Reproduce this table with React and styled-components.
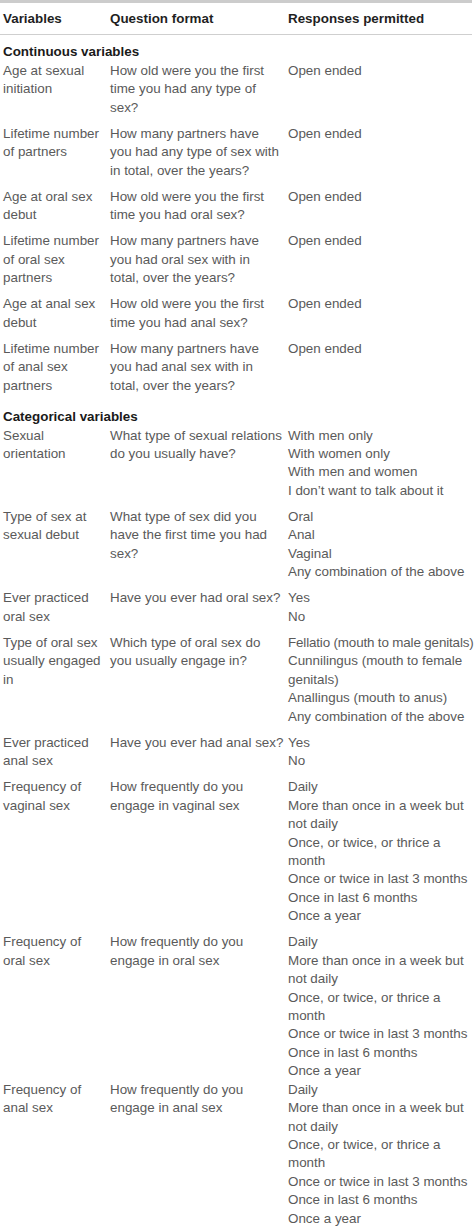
import styled, { createGlobalStyle } from 'styled-components';

const GlobalStyle = createGlobalStyle`
  html, body {
    margin: 0;
    padding: 0;
    background: #ffffff;
    overflow-x: hidden;
  }
  body {
    font-family: 'Liberation Sans', Arial, Helvetica, sans-serif;
    -webkit-font-smoothing: antialiased;
  }
`;

const rows = {
  continuous: [
    {
      variable: 'Age at sexual initiation',
      question: 'How old were you the first time you had any type of sex?',
      responses: ['Open ended'],
    },
    {
      variable: 'Lifetime number of partners',
      question: 'How many partners have you had any type of sex with in total, over the years?',
      responses: ['Open ended'],
    },
    {
      variable: 'Age at oral sex debut',
      question: 'How old were you the first time you had oral sex?',
      responses: ['Open ended'],
    },
    {
      variable: 'Lifetime number of oral sex partners',
      question: 'How many partners have you had oral sex with in total, over the years?',
      responses: ['Open ended'],
    },
    {
      variable: 'Age at anal sex debut',
      question: 'How old were you the first time you had anal sex?',
      responses: ['Open ended'],
    },
    {
      variable: 'Lifetime number of anal sex partners',
      question: 'How many partners have you had anal sex with in total, over the years?',
      responses: ['Open ended'],
    },
  ],
  categorical: [
    {
      variable: 'Sexual orientation',
      question: 'What type of sexual relations do you usually have?',
      responses: [
        'With men only',
        'With women only',
        'With men and women',
        'I don’t want to talk about it',
      ],
    },
    {
      variable: 'Type of sex at sexual debut',
      question: 'What type of sex did you have the first time you had sex?',
      responses: ['Oral', 'Anal', 'Vaginal', 'Any combination of the above'],
    },
    {
      variable: 'Ever practiced oral sex',
      question: 'Have you ever had oral sex?',
      short: true,
      responses: ['Yes', 'No'],
    },
    {
      variable: 'Type of oral sex usually engaged in',
      question: 'Which type of oral sex do you usually engage in?',
      responses: [
        'Fellatio (mouth to male genitals)',
        'Cunnilingus (mouth to female genitals)',
        'Anallingus (mouth to anus)',
        'Any combination of the above',
      ],
    },
    {
      variable: 'Ever practiced anal sex',
      question: 'Have you ever had anal sex?',
      short: true,
      responses: ['Yes', 'No'],
    },
  ],
};

const frequency = [
  'Daily',
  'More than once in a week but not daily',
  'Once, or twice, or thrice a month',
  'Once or twice in last 3 months',
  'Once in last 6 months',
  'Once a year',
];

['vaginal', 'oral', 'anal'].forEach((kind) => {
  rows.categorical.push({
    variable: `Frequency of ${kind} sex`,
    question: `How frequently do you engage in ${kind} sex`,
    responses: frequency,
    compact: kind === 'oral',
  });
});

// this one runs right up to the edge in the original
const tightResponses = ['Fellatio (mouth to male genitals)'];

function App() {
  return (
    <>
      <GlobalStyle />
      <Table>
        <HeadRow>
          <VarCell $head>Variables</VarCell>
          <QuestionCell $head>Question format</QuestionCell>
          <ResponseCell $head>Responses permitted</ResponseCell>
        </HeadRow>
        <Body>
          <Section title='Continuous variables' items={rows.continuous} first />
          <Section title='Categorical variables' items={rows.categorical} />
        </Body>
      </Table>
    </>
  );
}

function Section({ title, items, first }) {
  return (
    <>
      <SectionTitle $first={first}>{title}</SectionTitle>
      {items.map((item, index) => (
        <Row key={index} $compact={item.compact}>
          <VarCell>{item.variable}</VarCell>
          <QuestionCell $nowrap={item.short}>{item.question}</QuestionCell>
          <ResponseCell>
            {item.responses.map((response, i) => (
              <Response key={i} $tight={tightResponses.includes(response)}>
                {response}
              </Response>
            ))}
          </ResponseCell>
        </Row>
      ))}
    </>
  );
}

export default App;

const Table = styled.div`
  width: 472px;
  font-size: 13.4px;
  line-height: 18.4px;
  color: #5a5a5a;
`;

const HeadRow = styled.div`
  display: flex;
  padding: 7px 0 6px 3px;
  border-top: 3px solid #cccccc;
  border-bottom: 1px solid #cfcfcf;
`;

const Body = styled.div`
  padding-left: 3px;
`;

const SectionTitle = styled.div`
  font-weight: 700;
  color: #1a1a1a;
  padding-top: ${(p) => (p.$first ? '8px' : '5px')};
`;

const Row = styled.div`
  display: flex;
  align-items: flex-start;
  padding-bottom: ${(p) => (p.$compact ? '0' : '7.8px')};
`;

const Cell = styled.div`
  flex: none;
  ${(p) => p.$head && 'font-weight: 700; color: #1f1f1f; white-space: nowrap;'}
`;

const VarCell = styled(Cell)`
  width: 101px;
  margin-right: 6px;
`;

const QuestionCell = styled(Cell)`
  width: 172.35px;
  margin-right: 5.65px;
  white-space: ${(p) => (p.$nowrap ? 'nowrap' : 'normal')};
`;

const ResponseCell = styled(Cell)`
  width: 192px;
`;

const Response = styled.div`
  white-space: ${(p) => (p.$tight ? 'nowrap' : 'normal')};
  letter-spacing: ${(p) => (p.$tight ? '-0.15px' : 'normal')};
`;
